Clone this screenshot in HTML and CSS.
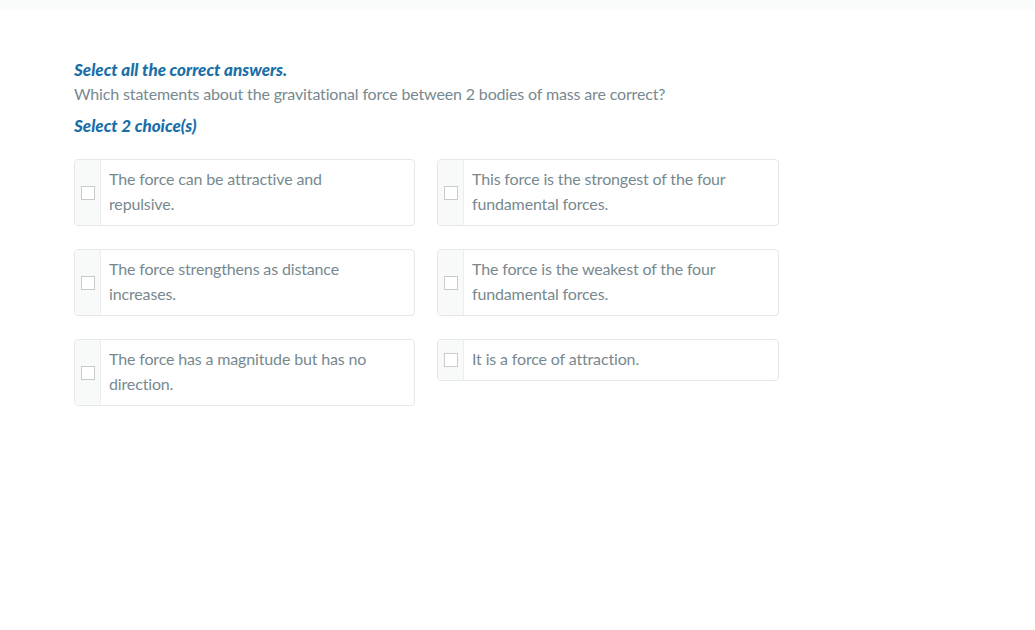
FILE: index.html
```html
<!DOCTYPE html>
<html lang="en">
<head>
<meta charset="utf-8">
<title>Quiz</title>
<link rel="stylesheet" href="styles.css">
</head>
<body>
<div class="topbar"></div>
<main class="quiz">
  <h2 class="instr">Select all the correct answers.</h2>
  <p class="question">Which statements about the gravitational force between 2 bodies of mass are correct?</p>
  <h3 class="count">Select 2 choice(s)</h3>
  <div class="choices">
    <label class="choice"><span class="box"><span class="check"></span></span><span class="text">The force can be attractive and repulsive.</span></label>
    <label class="choice"><span class="box"><span class="check"></span></span><span class="text">This force is the strongest of the four fundamental forces.</span></label>
    <label class="choice"><span class="box"><span class="check"></span></span><span class="text">The force strengthens as distance increases.</span></label>
    <label class="choice"><span class="box"><span class="check"></span></span><span class="text">The force is the weakest of the four fundamental forces.</span></label>
    <label class="choice"><span class="box"><span class="check"></span></span><span class="text">The force has a magnitude but has no direction.</span></label>
    <label class="choice"><span class="box"><span class="check"></span></span><span class="text">It is a force of attraction.</span></label>
  </div>
</main>
</body>
</html>
```
FILE: styles.css
```css
html, body {
  margin: 0;
  padding: 0;
  background: #ffffff;
}
body {
  font-family: Lato, "Liberation Sans", sans-serif;
  font-size: 16px;
  letter-spacing: -0.15px;
  color: #77898f;
}
.topbar {
  height: 10px;
  background: #f9fcfb;
}
.quiz {
  padding: 50px 0 0 74px;
}
.instr {
  margin: 0;
  font-size: 17px;
  line-height: 20px;
  font-weight: 900;
  font-style: italic;
  letter-spacing: 0;
  color: #1b6fa8;
}
.question {
  margin: 0;
  font-size: 16px;
  line-height: 28px;
}
.count {
  margin: 6px 0 0 0;
  font-size: 17px;
  line-height: 24px;
  font-weight: 900;
  font-style: italic;
  letter-spacing: 0;
  color: #1b6fa8;
}
.choices {
  margin-top: 21px;
  display: grid;
  grid-template-columns: 341px 342px;
  column-gap: 22px;
  row-gap: 23px;
  align-items: start;
}
.choice {
  display: flex;
  border: 1px solid #e5e8e8;
  border-radius: 4px;
  overflow: hidden;
  background: #fff;
  cursor: pointer;
}
.box {
  flex: 0 0 25px;
  background: #f8f9f9;
  border-right: 1px solid #eceeee;
  display: flex;
  align-items: center;
  justify-content: center;
}
.check {
  width: 12px;
  height: 12px;
  border: 1px solid #c9cccc;
  background: #fff;
}
.text {
  padding: 6px 8px 9px 8px;
  line-height: 25px;
  max-width: 270px;
}
```
